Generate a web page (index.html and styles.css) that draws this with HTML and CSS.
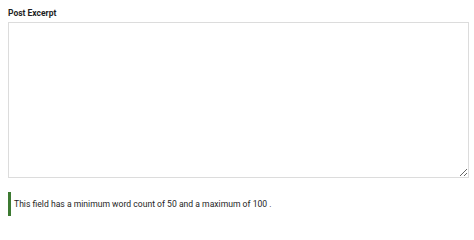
FILE: index.html
```html
<!DOCTYPE html>
<html>
<head>
<meta charset="utf-8">
<link rel="stylesheet" href="styles.css">
</head>
<body>
<div class="field">
  <label class="label" for="excerpt">Post Excerpt</label>
  <textarea id="excerpt" class="input"></textarea>
  <p class="note">This field has a minimum word count of 50 and a maximum of 100 .</p>
</div>
</body>
</html>
```

FILE: styles.css
```css
html, body {
  margin: 0;
  background: #fff;
}
body {
  padding: 8px 8px 0 8px;
  font-family: Roboto, "Liberation Sans", Arial, sans-serif;
  color: #1e1e1e;
}
.field {
  display: flex;
  flex-direction: column;
}
.label {
  font-size: 8.5px;
  font-weight: 700;
  line-height: 10px;
  margin-bottom: 4px;
}
.input {
  box-sizing: border-box;
  width: 461px;
  height: 156px;
  margin: 0;
  border: 1px solid #dcdcdc;
  border-radius: 0;
  padding: 4px;
  font-family: inherit;
  font-size: 9px;
  resize: vertical;
  outline: none;
}
.note {
  margin: 14px 0 0 0;
  border-left: 3px solid #3d7a32;
  padding: 5px 0 5px 3px;
  font-size: 8.6px;
  line-height: 14px;
}
```
